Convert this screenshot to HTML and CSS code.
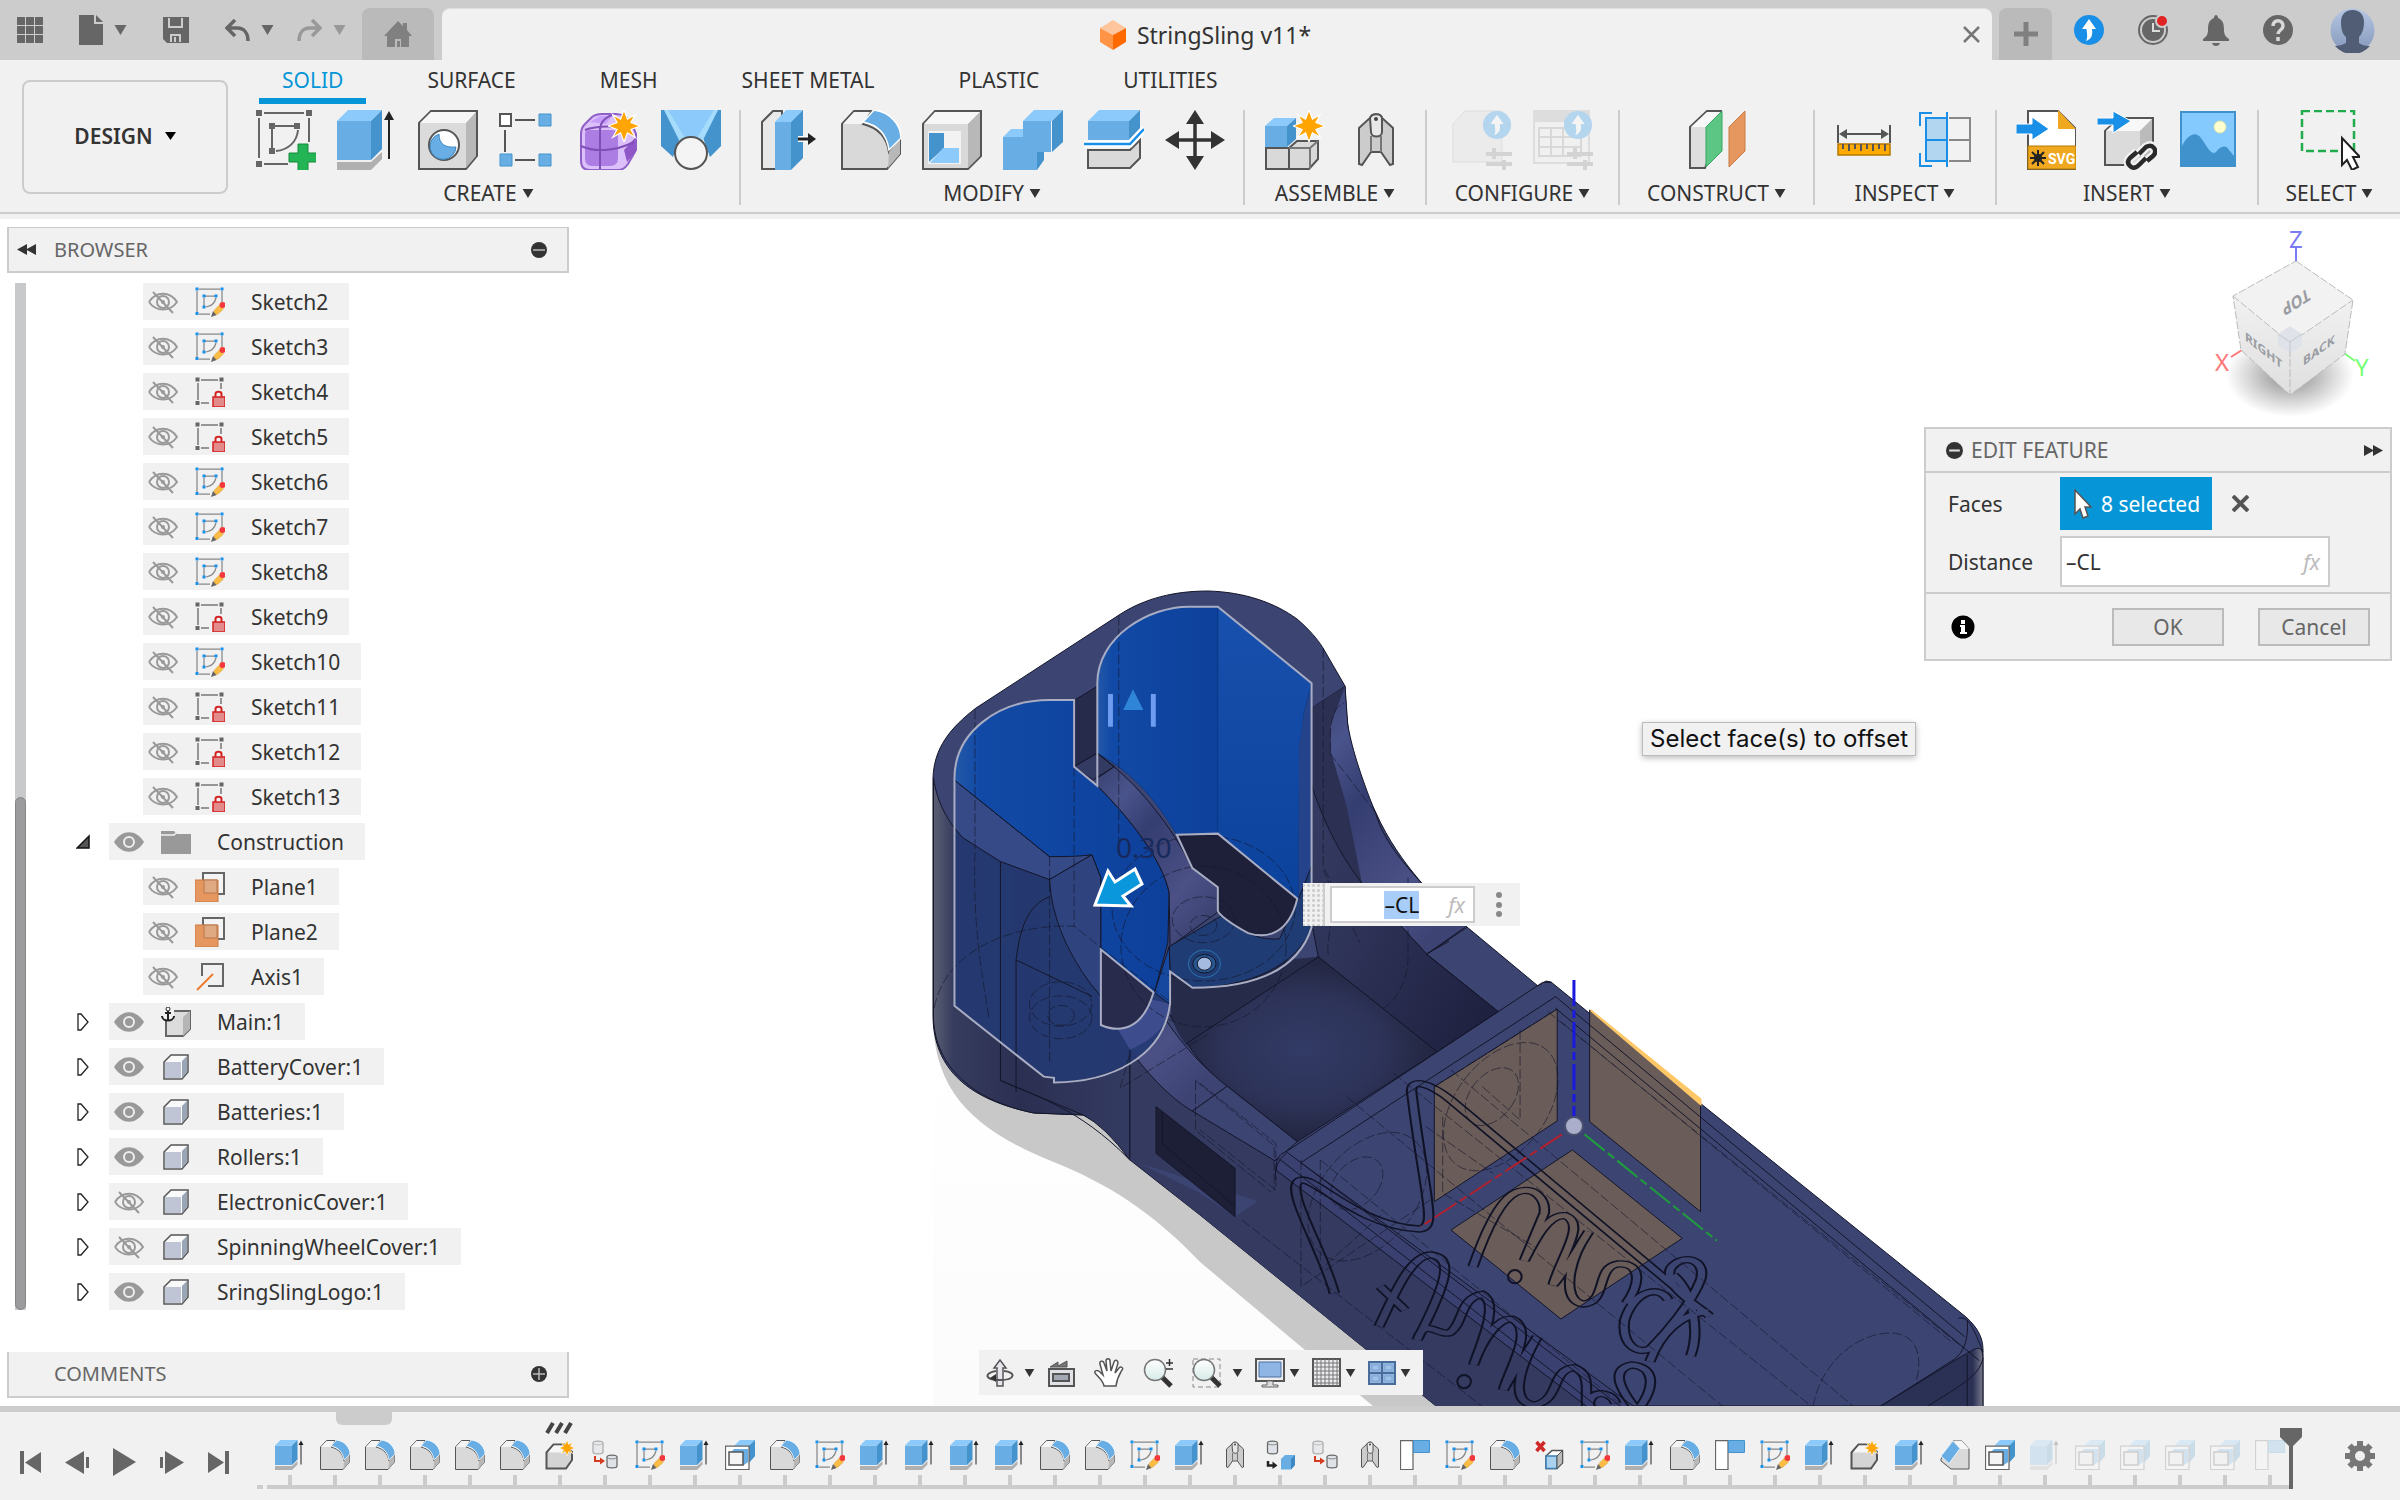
FILE: index.html
```html
<!DOCTYPE html>
<html lang="en">
<head>
<meta charset="utf-8">
<title>StringSling v11*</title>
<link rel="stylesheet" href="styles.css">
</head>
<body>
<svg class="defs" aria-hidden="true">
  <defs>
    <symbol id="caret" viewBox="0 0 12 10"><path d="M0 0H12L6 10Z" fill="currentColor"/></symbol>
    <symbol id="extrude" viewBox="0 0 60 60"><path d="M0 52H34L45 42V49L34 60H0Z" fill="#b0b0b0"/><path d="M0 11H34V50H0Z" fill="#68aee4"/><path d="M0 11L11 0H45L34 11Z" fill="#8bcafb"/><path d="M34 11L45 0V39L34 50Z" fill="#4593cc"/><path d="M52 6V49" stroke="#222" stroke-width="2"/><path d="M47 10L52 1L57 10Z" fill="#222"/></symbol>
    <symbol id="fillet" viewBox="0 0 60 60"><path d="M1 14L13 1H30L22 14C38 18 46 28 48 42L59 28V44L46 59H1Z" fill="#d9d9d9" stroke="#555" stroke-width="2"/><path d="M2 14L13 2H29L21 14Z" fill="#f4f4f4"/><path d="M48 42L59 28V44L47 58Z" fill="#b8b8b8"/><path d="M22 12L33 0C50 2 60 16 60 28L48 40C46 26 38 15 22 12Z" fill="#68aee4" stroke="#fff" stroke-width="1.5"/></symbol>
    <symbol id="chamfer" viewBox="0 0 60 60"><path d="M2 38L26 2H44L58 18V58H22L2 42Z" fill="#d9d9d9" stroke="#555" stroke-width="2"/><path d="M28 2H44L58 18H40Z" fill="#f6f6f6"/><path d="M2 32L26 2L40 17L18 47Z" fill="#68aee4" stroke="#fff" stroke-width="1.5"/></symbol>
    <symbol id="shell" viewBox="0 0 60 60"><path d="M1 14L13 1H59V46L46 59H1Z" fill="#d9d9d9" stroke="#555" stroke-width="2"/><path d="M2 14L13 2H58L46 14Z" fill="#f6f6f6"/><path d="M46 14L58 2V46L46 58Z" fill="#b8b8b8"/><path d="M6 21H39V54H6Z" fill="#f2f2f2"/><path d="M7 23H22V38L7 52Z" fill="#4593cc"/><path d="M8 53L21 38H37V53Z" fill="#8bcafb"/></symbol>
    <symbol id="offset" viewBox="0 0 60 60"><path d="M18 12L30 0H60V32L48 44H18Z" fill="#8bcafb"/><path d="M48 12L60 0V32L48 46Z" fill="#4593cc"/><path d="M1 12H48V59H1Z" fill="#fff" stroke="#666" stroke-width="2.5"/><path d="M10 26L18 18H46V44L38 50H10Z" fill="#68aee4"/><path d="M8 24H36V50H8Z" fill="#f4f4f4" stroke="#555" stroke-width="3"/></symbol>
    <symbol id="flange" viewBox="0 0 60 60"><path d="M1 1H26V59H1Z" fill="#fff" stroke="#666" stroke-width="2.5"/><path d="M27 1H59V25H27Z" fill="#68aee4" stroke="#4593cc" stroke-width="2"/></symbol>
    <symbol id="joint" viewBox="0 0 60 60"><path d="M13 18L24 8C26 3 34 3 36 8L47 18V54L44 55L35 42H25L16 55L13 54Z" fill="#ccc" stroke="#555" stroke-width="2"/><path d="M24 8C26 3 35 3 36 8V22C36 28 25 28 25 22Z" fill="#e8e8e8" stroke="#555" stroke-width="2"/><path d="M25 26V42M35 26V42" stroke="#777" stroke-width="2"/><circle cx="30" cy="9" r="2" fill="#444"/></symbol>
    <symbol id="star" viewBox="0 0 28 28"><path d="M14 0L17 8L24 4L20 11L28 14L20 17L24 24L17 20L14 28L11 20L4 24L8 17L0 14L8 11L4 4L11 8Z" fill="#ffa400" stroke="#fff" stroke-width="1"/></symbol>
    <symbol id="newcomp" viewBox="0 0 60 60"><path d="M3 25L17 9H40L54 24V40L42 57H3Z" fill="#d4d4d4" stroke="#555" stroke-width="4"/><path d="M6 25L18 11H38L40 25Z" fill="#f6f6f6"/><use href="#star" x="28" y="0" width="32" height="32"/></symbol>
    <symbol id="cyl" viewBox="0 0 24 30"><path d="M2 6C2 1 22 1 22 6V24C22 29 2 29 2 24Z" fill="#dfe2e8" stroke="#666" stroke-width="2.5"/><path d="M2 6C2 11 22 11 22 6" fill="none" stroke="#888" stroke-width="2"/></symbol>
    <symbol id="copy" viewBox="0 0 60 60"><use href="#cyl" x="4" y="0" width="24" height="30" opacity=".5"/><use href="#cyl" x="32" y="28" width="24" height="30"/><path d="M10 32V42H22" fill="none" stroke="#d63b22" stroke-width="4"/><path d="M20 35L30 42L20 49Z" fill="#d63b22"/></symbol>
    <symbol id="tobody" viewBox="0 0 60 60"><use href="#cyl" x="0" y="0" width="30" height="30"/><path d="M32 38L40 30H60V50L52 59H32Z" fill="#68aee4"/><path d="M52 38L60 30V50L52 59Z" fill="#3d87c2"/><path d="M6 42V51H16" fill="none" stroke="#222" stroke-width="5"/><path d="M15 43L25 51L15 58Z" fill="#222"/></symbol>
    <symbol id="remove" viewBox="0 0 60 60"><path d="M3 4L19 22M19 4L3 22" stroke="#cf2a27" stroke-width="7"/><path d="M22 32L34 21H55V46L44 57H22Z" fill="#fff" stroke="#555" stroke-width="3"/><path d="M22 32H44V57H22Z" fill="#a9d2ee" stroke="#3c7eb4" stroke-width="3"/><path d="M44 32L55 21V46L44 57Z" fill="#bbb" stroke="#555" stroke-width="2"/></symbol>
    <symbol id="sketchpen" viewBox="0 0 60 60"><path d="M8 4H50M4 8V50M54 8V30M8 54H30M19 18H40M18 22V38M22 40C34 38 40 30 42 22" fill="none" stroke="#888" stroke-width="2.5"/><path d="M1 1h6v6h-6zM51 1h6v6h-6zM1 50h6v6h-6zM15 15h6v6h-6zM39 15h6v6h-6zM15 37h6v6h-6z" fill="#1a8fe8"/><path d="M39 46L49 36L57 44L46 54L36 57Z" fill="#fbbc45" stroke="#d8962a" stroke-width="1"/><path d="M32 60L36 48L43 56Z" fill="#666"/><circle cx="55" cy="36" r="6" fill="#f2383a"/></symbol>
    <symbol id="sketchlock" viewBox="0 0 60 60"><path d="M12 6H46M6 12V46M52 12V24M12 52H28" stroke="#777" stroke-width="3"/><path d="M1 1h8v8h-8zM49 1h8v8h-8zM1 48h8v8h-8z" fill="#666"/><path d="M41 40V34C41 28 53 28 53 34V40" fill="none" stroke="#d32222" stroke-width="4"/><path d="M36 40H60V60H36Z" fill="#e38a8a" stroke="#d32222" stroke-width="3"/></symbol>
    <symbol id="eye" viewBox="0 0 30 20"><path d="M0 10C8-3 22-3 30 10C22 23 8 23 0 10Z" fill="#999"/><circle cx="15" cy="10" r="5" fill="none" stroke="#eee" stroke-width="2"/></symbol>
    <symbol id="eyeoff" viewBox="0 0 30 24"><path d="M1 12C8 1 22 1 29 12C22 22 8 22 1 12M5 2L25 23" fill="none" stroke="#999" stroke-width="2"/><circle cx="15" cy="12" r="6" fill="none" stroke="#999" stroke-width="2"/><circle cx="15" cy="12" r="2" fill="#999"/></symbol>
    <symbol id="folder" viewBox="0 0 30 26"><path d="M0 2H13L16 5H30V25H0Z" fill="#999"/><path d="M0 6H13L16 3" fill="none" stroke="#f1f1f1" stroke-width="1.5"/></symbol>
    <symbol id="plane" viewBox="0 0 30 30"><path d="M8 1H29V22H8Z" fill="#f4f4f4" stroke="#666" stroke-width="2"/><path d="M0 8H23V30H0Z" fill="#e6975f" stroke="#c97b43"/><path d="M9 8H22V21H9Z" fill="#dfa981" stroke="#b9774c"/></symbol>
    <symbol id="axis" viewBox="0 0 30 30"><path d="M7 14V2H28V24H13" fill="none" stroke="#666" stroke-width="2"/><path d="M2 28L18 12" stroke="#ec7c33" stroke-width="2"/></symbol>
    <symbol id="body" viewBox="0 0 30 30"><path d="M3 10L10 3H27V20L21 27H3Z" fill="#fafafa" stroke="#555" stroke-width="1.5"/><path d="M4 10H20V26H4Z" fill="#bfc5d4"/><path d="M21 9L26 4V20L21 26Z" fill="#9aa5b5"/></symbol>
    <symbol id="anchor" viewBox="0 0 30 30"><path d="M5 10L12 4H29V22L22 29H5Z" fill="#dcdcdc" stroke="#666" stroke-width="2"/><path d="M22 10L29 4V22L22 29Z" fill="#b5b5b5"/><path d="M0 0H13V14H0Z" fill="#f1f1f1"/><path d="M7 3V14M1 9C1 15 13 15 13 9M4 6H10" fill="none" stroke="#222" stroke-width="2"/><circle cx="7" cy="2" r="2" fill="#fff" stroke="#222"/></symbol>
    <symbol id="twisty" viewBox="0 0 12 18"><path d="M1 1H4L11 9L4 17H1Z" fill="#fff" stroke="#222" stroke-width="1.3"/></symbol>
    <symbol id="extension" viewBox="0 0 32 32"><circle cx="16" cy="16" r="15" fill="#1a8fe8"/><path d="M16 5L23 15H19C20 22 18 25 13 27C15 23 14 20 13.500 15H9Z" fill="#fff"/></symbol>
    <linearGradient id="gAvatar" x2="0" y2="1"><stop stop-color="#b4c6e2"/><stop offset="1" stop-color="#8698bb"/></linearGradient>
    <linearGradient id="gWall"><stop stop-color="#5b5f74"/><stop offset=".1" stop-color="#363c5e"/><stop offset=".45" stop-color="#2b3052"/><stop offset="1" stop-color="#343b62"/></linearGradient>
    <linearGradient id="gPocket"><stop stop-color="#2458a8"/><stop offset=".12" stop-color="#114aa6"/><stop offset="1" stop-color="#0d409b"/></linearGradient>
    <linearGradient id="gPocketR" x2="0" y2="1"><stop stop-color="#1850ad"/><stop offset="1" stop-color="#0b429c"/></linearGradient>
    <linearGradient id="gStrip" x2=".7" y2="1"><stop stop-color="#343c68"/><stop offset=".25" stop-color="#4a548c"/><stop offset=".45" stop-color="#353e70"/><stop offset=".8" stop-color="#4b5085"/><stop offset="1" stop-color="#3d4474"/></linearGradient>
    <linearGradient id="gInner" y2=".8"><stop stop-color="#373e66"/><stop offset=".5" stop-color="#2d3256"/><stop offset="1" stop-color="#1f2140"/></linearGradient>
    <radialGradient id="gFloor"><stop stop-color="#323b66"/><stop offset=".6" stop-color="#2d3358"/><stop offset="1" stop-color="#22253f"/></radialGradient>
    <linearGradient id="gEdge"><stop offset=".9" stop-color="#2b3055"/><stop offset="1" stop-color="#77798a"/></linearGradient>
    <linearGradient id="gGround" x2="0" y2="1"><stop stop-color="#fff"/><stop offset="1" stop-color="#fbfbfb"/></linearGradient>
    <linearGradient id="gLens" x2="0" y2="1"><stop stop-color="#fff"/><stop offset="1" stop-color="#d5ebe8"/></linearGradient>
    <linearGradient id="gFace" x2="0" y2="1"><stop stop-color="#f1f1f1"/><stop offset="1" stop-color="#dfdfdf"/></linearGradient>
    <radialGradient id="gShade"><stop stop-color="#777" stop-opacity=".9"/><stop offset="1" stop-color="#888" stop-opacity="0"/></radialGradient>
  </defs>
</svg>

<header class="topbar">
  <div class="quick">
    <button class="ic" aria-label="Data panel"><svg width="26" height="26" viewBox="0 0 26 26"><path d="M0 0h8v8H0zM9 0h8v8H9zM18 0h8v8h-8zM0 9h8v8H0zM9 9h8v8H9zM18 9h8v8h-8zM0 18h8v8H0zM9 18h8v8H9zM18 18h8v8h-8z" fill="#666"/></svg></button>
    <button class="ic file" aria-label="File"><svg width="24" height="30" viewBox="0 0 24 30"><path d="M0 0H15V9H24V30H0Z" fill="#666"/><path d="M17 0L24 7H17Z" fill="#666"/></svg><svg width="13" height="10"><use href="#caret"/></svg></button>
    <button class="ic" aria-label="Save"><svg width="26" height="26" viewBox="0 0 26 26"><path d="M0 0H26V26H4L0 22Z" fill="#666"/><path d="M6 1V10H19V1M8 25V18H17V25M12 20V25" fill="none" stroke="#ccc" stroke-width="2"/></svg></button>
    <div class="history">
      <button class="ic" aria-label="Undo"><svg width="25" height="23" viewBox="0 0 25 23"><path d="M10 1L2 9L10 17M3 9H12C19 9 23 14 23 22" fill="none" stroke="#666" stroke-width="3.500"/></svg><svg width="13" height="10"><use href="#caret"/></svg></button>
      <button class="ic faded" aria-label="Redo"><svg width="25" height="23" viewBox="0 0 25 23"><path d="M15 1L23 9L15 17M22 9H13C6 9 2 14 2 22" fill="none" stroke="#666" stroke-width="3.500"/></svg><svg width="13" height="10"><use href="#caret"/></svg></button>
    </div>
  </div>
  <button class="tab small home" aria-label="Home"><svg width="28" height="26" viewBox="0 0 28 26"><path d="M14 0L19 5V2H23V9L28 15H25V26H17V18H11V26H3V15H0Z" fill="#808080"/><path d="M13 20h3v6h-3z" fill="#808080"/></svg></button>
  <div class="tab doc">
    <div class="title"><svg width="28" height="30" viewBox="0 0 28 30"><path d="M14 0L27 8L14 15L1 8Z" fill="#ffc59c"/><path d="M1 8L14 15V30L1 22Z" fill="#ff9447"/><path d="M27 8L14 15V30L27 22Z" fill="#ff6a00"/></svg><span>StringSling v11*</span></div>
    <button class="ic close" aria-label="Close"><svg width="17" height="17" viewBox="0 0 17 17"><path d="M1 1L16 16M16 1L1 16" stroke="#777" stroke-width="2.500"/></svg></button>
  </div>
  <button class="tab small plus" aria-label="New tab"><svg width="24" height="24" viewBox="0 0 24 24"><path d="M12 0V24M0 12H24" stroke="#808080" stroke-width="5"/></svg></button>
  <div class="account">
    <button class="ic" aria-label="Extensions"><svg width="32" height="32"><use href="#extension"/></svg></button>
    <button class="ic" aria-label="Job status"><svg width="32" height="32" viewBox="0 0 32 32"><circle cx="15" cy="16" r="14" fill="none" stroke="#666" stroke-width="2"/><circle cx="15" cy="16" r="11" fill="#666"/><path d="M15 9V17H22" fill="none" stroke="#ddd" stroke-width="2"/><circle cx="24" cy="7" r="6" fill="#e02424" stroke="#ccc" stroke-width="2"/></svg></button>
    <button class="ic" aria-label="Notifications"><svg width="26" height="31" viewBox="0 0 26 31"><path d="M11 3C11-1 15-1 15 3C20 5 21 9 21 15C21 20 23 22 26 24V26H0V24C3 22 5 20 5 15C5 9 6 5 11 3ZM9 28H17C16 32 10 32 9 28Z" fill="#666"/></svg></button>
    <button class="ic" aria-label="Help"><svg width="32" height="32" viewBox="0 0 32 32"><circle cx="16" cy="16" r="15" fill="#666"/><path d="M11 12C11 5 21 5 21 12C21 16 16 16 16 20M16 23V27" fill="none" stroke="#d8d8d8" stroke-width="3.500"/></svg></button>
    <button class="ic" aria-label="Profile"><svg width="45" height="45" viewBox="0 0 45 45"><circle cx="22.500" cy="22.500" r="22" fill="url(#gAvatar)"/><path d="M11 14C11 6 16 2 22.500 2S34 6 34 14C34 21 32 26 29 29V35C33 38 38 38 40 38A23 23 0 0 1 5 38C8 38 13 37 16 35V29C12 26 11 20 11 14Z" fill="#505d75"/></svg></button>
  </div>
</header>

<section class="ribbon">
  <div class="ribbon-in">
    <button class="design">DESIGN <svg width="11" height="8" viewBox="0 0 12 10" preserveAspectRatio="none"><path d="M0 0H12L6 10Z"/></svg></button>
    <div class="ribbon-main">
      <nav class="tabs">
        <button class="on">SOLID</button><button>SURFACE</button><button>MESH</button><button>SHEET METAL</button><button>PLASTIC</button><button>UTILITIES</button>
      </nav>
      <div class="groups">
        <div class="group">
          <div class="tools">
            <button aria-label="Create sketch"><svg viewBox="0 0 60 60"><path d="M8 3H48M3 8V48M53 8V32M8 54H32M18 16H38M16 18V38M20 41C32 40 41 32 42 20" fill="none" stroke="#666" stroke-width="2"/><path d="M0 0h6v6H0zM50 0h6v6h-6zM0 51h6v6H0zM13 13h6v6h-6zM38 13h6v6h-6zM13 38h6v6h-6z" fill="#666"/><path d="M42 34h10v9h9v9h-9v9h-10v-9h-9v-9h9z" fill="#22b455" stroke="#148a3c"/></svg></button>
            <button aria-label="Extrude"><svg><use href="#extrude"/></svg></button>
            <button aria-label="Hole"><svg viewBox="0 0 60 60"><path d="M1 13L13 1H59V46L48 59H1Z" fill="#dbdbdb" stroke="#555" stroke-width="2"/><path d="M2 13L13 2H58L48 13Z" fill="#f6f6f6"/><path d="M48 13L58 2V46L48 58Z" fill="#b8b8b8"/><circle cx="26" cy="35" r="15" fill="#fff" stroke="#555" stroke-width="2"/><path d="M21 24C21 34 27 38 38 37A13 13 0 1 1 21 24Z" fill="#68aee4" stroke="#3d87c2"/></svg></button>
            <button aria-label="Pattern"><svg viewBox="0 0 60 60"><path d="M16 10H36M6 20V42M16 50H36" stroke="#555" stroke-width="2"/><path d="M1 4h11v12H1z" fill="#fff" stroke="#555" stroke-width="2"/><path d="M40 4h12v12H40zM1 44h12v12H1zM40 44h12v12H40z" fill="#68aee4" stroke="#4593cc"/></svg></button>
            <button aria-label="Create form"><svg viewBox="0 0 60 60"><path d="M1 24Q1 18 5 14L12 7Q16 4 22 4H36Q46 4 52 14L56 24V40L48 54Q44 60 38 60H10Q1 60 1 51Z" fill="#dcc0fa" stroke="#8e5fc7" stroke-width="2"/><path d="M5 24Q5 20 10 20H32Q38 20 38 26V48Q38 56 30 56H12Q5 56 5 48Z" fill="#ac7ee4"/><path d="M44 40L55 28V42L47 52Z" fill="#9057c9"/><path d="M10 12L20 6H32L26 14Z" fill="#c79dfa"/><path d="M1 36C14 42 34 42 54 32M20 59V20C20 12 26 7 32 5M5 20C14 16 30 16 42 17" fill="none" stroke="#8050b8" stroke-width="2"/><use href="#star" x="28" y="0" width="32" height="32"/></svg></button>
            <button aria-label="Derive"><svg viewBox="0 0 60 60"><path d="M0 0H60V36L49 47L42 28H19L12 47L0 36Z" fill="#4593cc"/><path d="M3 0L18 38H42L57 0L42 38H18Z" fill="#a5dcfb"/><path d="M3 0L20 34H40L57 0Z" fill="#a5dcfb"/><path d="M7 0H53L36 28H24Z" fill="#8bcafb"/><circle cx="30" cy="43" r="16" fill="#f4f4f4" stroke="#555" stroke-width="2"/></svg></button>
          </div>
          <button class="label">CREATE <svg><use href="#caret"/></svg></button>
        </div>
        <div class="group">
          <div class="tools">
            <button aria-label="Press pull"><svg viewBox="0 0 60 60"><path d="M2 12L13 1H22V59H2Z" fill="#e8e8e8" stroke="#555" stroke-width="2"/><path d="M15 12H31V60H15Z" fill="#68aee4"/><path d="M15 12L26 0H43L31 12Z" fill="#8bcafb"/><path d="M31 12L43 0V48L31 60Z" fill="#4593cc"/><path d="M38 29H50" stroke="#fff" stroke-width="6"/><path d="M38 29H50" stroke="#222" stroke-width="3"/><path d="M48 23L56 29L48 35Z" fill="#222"/></svg></button>
            <button aria-label="Fillet"><svg><use href="#fillet"/></svg></button>
            <button aria-label="Shell"><svg><use href="#shell"/></svg></button>
            <button aria-label="Combine"><svg viewBox="0 0 60 60"><path d="M0 27H20V11H48V42H34V60H0Z" fill="#68aee4"/><path d="M0 27L8 19H20V27ZM20 11L31 0H60L49 11Z" fill="#8bcafb"/><path d="M49 11L60 0V32L49 42H41V50L34 60V42H49Z" fill="#4593cc"/></svg></button>
            <button aria-label="Split body"><svg viewBox="0 0 60 60"><path d="M4 40H46L56 30V48L46 58H4Z" fill="#d9d9d9" stroke="#555" stroke-width="2"/><path d="M4 30H45V11H4Z" fill="#68aee4"/><path d="M4 11L15 0H56L45 11Z" fill="#8bcafb"/><path d="M45 11L56 0V19L45 30Z" fill="#4593cc"/><path d="M0 34H46L60 19" fill="none" stroke="#fff" stroke-width="7"/><path d="M0 34H46L60 19" fill="none" stroke="#1a8fe8" stroke-width="2.500"/></svg></button>
            <button aria-label="Move"><svg viewBox="0 0 60 60"><path d="M30 8V52M8 30H52" stroke="#333" stroke-width="3.500"/><path d="M30 0L39 14H21ZM30 60L39 46H21ZM0 30L14 21V39ZM60 30L46 21V39Z" fill="#333"/></svg></button>
          </div>
          <button class="label">MODIFY <svg><use href="#caret"/></svg></button>
        </div>
        <div class="group">
          <div class="tools">
            <button aria-label="New component"><svg viewBox="0 0 60 60"><path d="M1 38H24V59H1ZM24 38L32 31H53V49L44 59H24Z" fill="#d9d9d9" stroke="#555" stroke-width="2"/><path d="M24 38H45V59M45 38L53 31" fill="none" stroke="#777" stroke-width="2"/><path d="M0 16H22V37H0Z" fill="#68aee4"/><path d="M0 16L9 8H31L22 16Z" fill="#8bcafb"/><path d="M22 16L31 8V29L22 37Z" fill="#4593cc"/><use href="#star" x="28" y="0" width="32" height="32"/></svg></button>
            <button aria-label="Joint"><svg><use href="#joint"/></svg></button>
          </div>
          <button class="label">ASSEMBLE <svg><use href="#caret"/></svg></button>
        </div>
        <div class="group">
          <div class="tools dim">
            <button aria-label="Configure" disabled><svg viewBox="0 0 60 60"><path d="M1 14L13 1H50V52H1Z" fill="#ddd" stroke="#aaa"/><path d="M34 44H60M34 54H60M42 38V49M52 50V60" stroke="#888" stroke-width="4"/><use href="#extension" x="30" y="0" width="30" height="30"/></svg></button>
            <button aria-label="Configuration table" disabled><svg viewBox="0 0 60 60"><path d="M1 1H56V53H1Z" fill="#eee" stroke="#aaa" stroke-width="2"/><path d="M1 1H56V12H1Z" fill="#aaa"/><path d="M6 18H48V46H6ZM6 27H48M6 37H48M18 18V46M30 18V46" fill="none" stroke="#999" stroke-width="2"/><path d="M34 44H60M34 54H60M42 38V49M52 50V60" stroke="#888" stroke-width="4"/><use href="#extension" x="30" y="0" width="30" height="30"/></svg></button>
          </div>
          <button class="label">CONFIGURE <svg><use href="#caret"/></svg></button>
        </div>
        <div class="group">
          <div class="tools">
            <button aria-label="Offset plane"><svg viewBox="0 0 60 60"><path d="M3 17L20 1H34V17L18 58H3Z" fill="#dedede" stroke="#555" stroke-width="2"/><path d="M4 17L20 2H33L19 17Z" fill="#f8f8f8"/><path d="M19 17L35 1V41L19 57Z" fill="#5cc684" stroke="#38a563"/><path d="M42 17L58 1V41L42 57Z" fill="#e6975f" stroke="#c97b43"/></svg></button>
          </div>
          <button class="label">CONSTRUCT <svg><use href="#caret"/></svg></button>
        </div>
        <div class="group">
          <div class="tools">
            <button aria-label="Measure"><svg viewBox="0 0 60 60"><path d="M3 15V33M55 15V33M8 24H50" stroke="#555" stroke-width="2"/><path d="M4 24L12 19V29ZM54 24L46 19V29Z" fill="#555"/><path d="M3 34H55V45H3Z" fill="#ffaa00" stroke="#b47800" stroke-width="1.500"/><path d="M8 34V39M14 34V41M20 34V39M26 34V41M32 34V39M38 34V41M44 34V39M50 34V41" stroke="#555" stroke-width="2"/></svg></button>
            <button aria-label="Section"><svg viewBox="0 0 60 60"><path d="M33 8H54V51H33M33 30H54" fill="#f2f2f2" stroke="#888" stroke-width="2"/><path d="M10 8H31V51H10ZM10 30H31" fill="#b2d6f0" stroke="#1a8fe8" stroke-width="2"/><path d="M31 2V57M16 3H4V16M4 43V56H16" fill="none" stroke="#1a8fe8" stroke-width="2"/></svg></button>
          </div>
          <button class="label">INSPECT <svg><use href="#caret"/></svg></button>
        </div>
        <div class="group">
          <div class="tools">
            <button aria-label="Insert SVG"><svg viewBox="0 0 60 60"><path d="M12 1H42L60 19V59H12Z" fill="#fff" stroke="#555" stroke-width="2"/><path d="M42 0L60 19H42Z" fill="#f0a820"/><path d="M12 36H60V59H12Z" fill="#f0a820" stroke="#b47800"/><path d="M0 14H16V7L33 19L16 30V24H0Z" fill="#1a8fe8" stroke="#fff"/><g stroke="#222" stroke-width="2" fill="none"><circle cx="22" cy="48" r="3"/><path d="M22 40V56M14 48H30M16 42L28 54M28 42L16 54"/></g><text x="32" y="54" class="svgtxt">SVG</text></svg></button>
            <button aria-label="Insert derive"><svg viewBox="0 0 60 60"><path d="M8 21L22 8H56V42L43 55H8Z" fill="#dbdbdb" stroke="#555" stroke-width="2"/><path d="M9 21L22 9H55L43 21Z" fill="#f8f8f8"/><path d="M43 21L55 9V42L43 54Z" fill="#bbb"/><path d="M0 8H16V1L34 11L16 23V15H0Z" fill="#1a8fe8" stroke="#fff"/><g fill="none" stroke="#f1f1f1" stroke-width="9"><path d="M42 44L49 37Q54 34 57 38Q60 42 56 46L50 51M49 48L42 55Q37 60 33 56Q29 52 33 48L40 42"/></g><g fill="none" stroke="#2a2a2a" stroke-width="4.500"><path d="M42 44L49 37Q54 34 57 38Q60 42 56 46L50 51M49 48L42 55Q37 60 33 56Q29 52 33 48L40 42"/></g></svg></button>
            <button aria-label="Canvas"><svg viewBox="0 0 60 60"><path d="M3 2H57V56H3Z" fill="#84caff" stroke="#3f92cc" stroke-width="2"/><path d="M4 36C9 26 17 20 23 28C29 36 33 46 38 42C42 36 48 34 51 40L56 46V55H4Z" fill="#3f92cc"/><circle cx="42" cy="17" r="6" fill="#ffffd0" stroke="#dfe6a8"/></svg></button>
          </div>
          <button class="label">INSERT <svg><use href="#caret"/></svg></button>
        </div>
        <div class="group">
          <div class="tools">
            <button aria-label="Select"><svg viewBox="0 0 60 60"><path d="M2 1H54V41H2Z" fill="none" stroke="#20ab4c" stroke-width="2.500" stroke-dasharray="8 4"/><path d="M42 28L60 47H53L58 57L52 60L47 50L42 55Z" fill="#fff" stroke="#222" stroke-width="2"/></svg></button>
          </div>
          <button class="label">SELECT <svg><use href="#caret"/></svg></button>
        </div>
      </div>
    </div>
  </div>
</section>

<main class="viewport">
  <svg class="scene" viewBox="0 219 2400 1187" preserveAspectRatio="xMidYMid slice">
    <defs>
      <path id="script" d="M522 980C540 900 570 780 605 757C640 735 662 780 658 820L620 962C640 900 665 822 698 827C740 850 690 950 675 1035C700 990 725 920 743 875C705 960 690 1080 732 1092C780 1090 755 980 800 972C850 970 838 1040 815 1090M895 1080C880 1035 830 1050 812 1140C805 1220 840 1245 862 1225C890 1180 940 1090 957 1020C970 955 920 940 900 985C885 1040 950 1095 974 1128M860 1265C880 1180 920 1120 972 1115M938 1248C955 1180 945 1060 905 1005M257 1060C235 930 160 745 190 722C215 700 300 860 420 867C455 860 430 780 405 460C400 410 440 430 480 480L930 1070M342 1160C370 1070 400 950 440 945C485 950 475 1020 415 1200M345 1040L392 1110M415 1200C430 1130 455 1190 478 1178C505 1150 495 1075 540 1063C572 1090 540 1200 523 1275C540 1200 570 1130 598 1138C640 1170 590 1290 580 1350C600 1290 630 1230 645 1190C605 1300 595 1390 640 1395C690 1380 670 1290 715 1283C750 1300 735 1360 740 1400M842 1400C870 1340 870 1280 825 1275C780 1290 810 1360 830 1400M745 1400C740 1350 785 1350 795 1390"/>
      <mask id="tube" maskUnits="userSpaceOnUse" x="0" y="300" width="1200" height="1200"><path d="M0 300H1200V1500H0Z" fill="#fff"/><use href="#script" fill="none" stroke="#000" stroke-width="14"/></mask>
    </defs>
    <path d="M933 1050H1380V1406H933Z" fill="url(#gGround)"/>
    <path d="M933 1020C935 1090 970 1130 1061 1165C1120 1190 1160 1220 1200 1262L1305 1350L1373 1406H1440L1373 1340L1083 1100Z" fill="#c8c8c8"/>
    <path d="M933 778C934 748 950 728 976 708L1119 615C1145 598 1175 591 1208 591C1245 592 1275 603 1297 619C1310 630 1318 640 1323 648L1345 686C1346 710 1347 725 1351 744C1357 770 1364 790 1376 813C1388 840 1404 862 1420 881C1435 900 1450 914 1467 927L1538 986L1546 981L1551 982L1700 1103L1966 1317C1978 1328 1983 1338 1983 1350V1406H1436L1200 1215L1130 1160Q1105 1122 1083 1115L1034 1113C970 1100 933 1070 933 1015Z" fill="#3c4472" stroke="#14162a"/>
    <g class="lines" transform="translate(900 560) scale(.4464 .3827)">
      <!-- outer wall of the holder and its cut-outs -->
      <path d="M75 570C85 650 120 700 140 725C170 755 200 775 225 788L335 835C345 950 400 1080 515 1280V1568Q460 1480 410 1450L300 1445C150 1410 75 1310 75 1190Z" fill="url(#gWall)"/>
      <path class="bare" d="M515 1280L655 1440L840 1535V1690L515 1568Z" fill="#343a60"/>
      <path d="M997 330L905 400L895 490C930 625 960 730 1035 845L1180 1030L1270 960C1230 910 1190 880 1165 840C1110 770 1080 720 1065 660C1030 560 1010 480 1003 430Z" fill="url(#gStrip)"/>
      <path class="bare" d="M997 330L905 400L895 490C930 640 980 770 1035 845L1000 640L965 500V430Z" fill="#2c3154"/>
      <path d="M895 490C930 625 960 730 1035 845L1180 1030L1340 1180L1203 1285L937 1037L925 965Z" fill="url(#gInner)"/>
      <path d="M937 1037L605 1190C650 1290 700 1350 733 1375L890 1520L1203 1285Z" fill="url(#gFloor)"/>
      <path class="bare" d="M605 1075L937 1037L640 1265C610 1220 600 1180 605 1075Z" fill="#262b4a"/>
      <path d="M937 1037L640 1265" fill="none"/>
      <path d="M335 835C345 950 400 1080 515 1280C560 1350 610 1410 655 1440L733 1375C660 1310 600 1220 570 1150L450 960L430 770Z" fill="url(#gStrip)"/>
      <path d="M655 1440L733 1375L890 1520L840 1570Z" fill="#3c4472"/>
      <!-- selected faces -->
      <path d="M122 575L335 775L430 770L335 835C340 900 390 1060 450 1140V1215C500 1240 540 1215 568 1130L605 1075V1160C600 1280 480 1365 345 1365V1352L320 1350L122 1165Z" fill="#233a72" fill-opacity=".9"/>
      <path d="M122 575L335 775L430 770L335 835L225 788L140 725L122 700Z" fill="#354a86"/>
      <path d="M335 835L430 770L450 830V1140C390 1060 340 950 335 835Z" fill="#2f447f"/>
      <path class="bare" d="M515 1280C590 1240 600 1200 605 1160L570 1150L450 1150Z" fill="#3c4c8c"/>
      <path d="M122 575C120 450 220 366 335 366L390 367V540L442 590C520 680 590 790 603 870L600 1000L570 1130L450 1018V830L430 770C400 775 370 775 335 775Z" fill="url(#gPocket)"/>
      <path class="soft" d="M442 325C440 200 560 120 650 122H712V715L620 718C580 640 530 560 442 505Z" fill="url(#gPocket)"/>
      <path class="soft" d="M712 122L922 322L905 400L895 490L893 885L712 715Z" fill="url(#gPocketR)"/>
      <path class="bare" d="M905 400L922 322V960L893 885V490Z" fill="#24438a"/>
      <path d="M390 367L442 330V505L390 540Z" fill="#272b4b"/>
      <path d="M390 540L442 505L480 540L432 575Z" fill="#343b63"/>
      <path d="M442 505C540 590 610 700 655 805L712 855V920L605 1010L603 870C590 790 520 680 442 590V570L480 540Z" fill="url(#gStrip)"/>
      <path d="M603 1010L720 930C760 960 790 995 850 990L893 885L922 800V960C890 1060 780 1118 650 1118L605 1075Z" fill="#1f3d74"/>
      <path d="M603 1010L570 1130L603 1160L605 1075Z" fill="#1648a0"/>
      <path d="M620 718L712 715L890 885C870 980 820 990 780 975C740 950 712 925 712 915V855L655 805Z" fill="#1e2039"/>
      <path d="M450 1018L568 1130C545 1220 500 1240 450 1215Z" fill="#292b4c"/>
      <g class="dash">
        <ellipse cx="680" cy="940" rx="70" ry="60"/><ellipse cx="680" cy="955" rx="30" ry="26"/><ellipse cx="680" cy="910" rx="205" ry="190"/><ellipse cx="680" cy="1010" rx="185" ry="210"/>
        <ellipse cx="360" cy="1160" rx="70" ry="58"/><ellipse cx="360" cy="1195" rx="70" ry="56"/><ellipse cx="361" cy="1190" rx="30" ry="26"/><path d="M77 1170C100 1020 250 950 390 957L600 1150M168 390V760C165 900 170 1000 200 1200M490 145V740M948 230V800L1030 1000M335 775V1320M390 540V957M965 500C960 430 970 380 995 375M963 505L1065 660M960 1030C950 990 990 900 948 810M1138 830V1040C1138 1090 1120 1140 1085 1170M515 1290L493 1380L690 1240M662 1360V1490L840 1660M662 1360L838 1530V1650"/>
      </g>
      <path d="M225 788V1360L410 1450M260 1045V1390M260 1045C270 950 290 900 335 880M260 1045L430 1140M515 1280V1568M225 1360C300 1400 400 1430 515 1568M1180 1030L1265 960" fill="none"/>
      <g class="halo"><path d="M442 590V325C440 200 560 120 650 122H712L922 322V960C890 1080 780 1118 655 1118L605 1075V1160C590 1300 470 1365 345 1365V1353L322 1350L122 1165V575C120 450 220 366 335 366H390V540Z"/><path d="M620 718L712 715L890 885C870 980 820 990 780 975C740 950 712 925 712 915V855L655 805ZM450 1018L568 1130C545 1220 500 1240 450 1215Z"/></g>
      <circle cx="682" cy="1055" r="36" fill="none" stroke="#2a74ae"/><ellipse cx="682" cy="1055" rx="26" ry="24" fill="#28568f"/><ellipse cx="682" cy="1055" rx="16" ry="17" fill="#a6bbe0" stroke="none"/>
      <path class="bare" d="M466 350h11v86h-11zM562 350h11v86h-11z" fill="#6e9cf0"/><path class="bare" d="M522 338L545 392H500Z" fill="#2f86d8"/>
    </g>
    <text class="dim-text" x="1116" y="858">0.30</text>
    <path d="M1095 905L1108 871L1115 882L1135 869L1142 884L1123 896L1131 906Z" fill="#0a97dc" stroke="#fff" stroke-width="3"/>
    <g class="lines" transform="translate(1200 940) scale(.523 .3333)">
      <!-- long body with the lid -->
      <path class="bare" d="M-140 650L0 760L67 830L143 750L150 655L740 1400H452L0 825Z" fill="#343a60"/>
      <path d="M-84 500L67 685V830L-84 640Z" fill="#1d1f37"/><path d="M-72 515V610L67 800" fill="none"/>
      <path d="M145 690C145 650 155 640 165 635L193 668L830 1400H740Z" fill="#3a4170"/>
      <path d="M1300 1400L1450 1255C1480 1230 1497 1200 1497 1260V1400Z" fill="url(#gEdge)"/>
      <path d="M683 207V543L448 785V440ZM745 210V545L957 815V478ZM712 630L922 895L690 1137L480 870Z" fill="#6a5c58" stroke="#80684f"/>
      <path class="sun" d="M747 211L957 478V492Z"/>
      <path d="M165 635L655 127L672 127M193 668L680 170L1462 1190M680 205L1490 1262M150 655L760 1400M193 668L805 1400M165 640Q140 670 145 720M433 42L476 4M570 215L433 42M1450 1135C1470 1125 1480 1170 1497 1235M1467 1140C1470 1200 1460 1240 1440 1260L1300 1400M1497 1255C1490 1310 1450 1340 1390 1400M1467 1245V1400" fill="none"/>
      <g class="dash">
        <path d="M665 215L1460 1225M690 245L1440 1210M280 470L1000 1400M370 400L1170 1400M230 660L810 1400M480 390L1250 1400M80 840L540 1400M0 430L145 610V750L0 570M612 270V540L540 440M464 530V760L640 920M193 660V1040L440 780M230 660V990L350 820M448 440L683 207M432 560L560 700"/>
        <path d="M1172 1400C1190 1250 1270 1170 1330 1180C1375 1190 1380 1260 1370 1320"/>
        <ellipse cx="558" cy="470" rx="45" ry="90" transform="rotate(18 558 470)"/><ellipse cx="575" cy="500" rx="95" ry="200" transform="rotate(18 575 500)"/><ellipse cx="300" cy="730" rx="45" ry="82" transform="rotate(18 300 730)"/><ellipse cx="320" cy="770" rx="100" ry="200" transform="rotate(18 320 770)"/>
      </g>
      <g mask="url(#tube)"><use href="#script" class="script"/></g>
      <ellipse class="dot" cx="602" cy="1010" rx="13" ry="20"/><ellipse class="dot" cx="505" cy="1325" rx="13" ry="20"/>
      <path class="ax ax-z" d="M715 120V530"/><path class="ax ax-y" d="M735 583L988 902"/><path class="ax ax-x" d="M692 583L422 860"/>
    </g>
    <circle cx="1574" cy="1126" r="9" fill="#aaaecb" stroke="#4a5070" stroke-width="2"/>
  </svg>

  <svg class="cube" viewBox="2200 219 180 206" width="180" height="206" role="img" aria-label="View cube">
    <ellipse cx="2290" cy="375" rx="64" ry="42" fill="url(#gShade)"/>
    <path d="M2296 248V262" stroke="#7b7bf5" stroke-width="2"/><path d="M2231 357L2242 350" stroke="#f77" stroke-width="2"/><path d="M2344 353L2355 361" stroke="#7f7" stroke-width="2"/>
    <path d="M2233 296L2290 343V395L2241 350Z" fill="url(#gFace)"/><path d="M2353 300L2290 343V395L2345 354Z" fill="url(#gFace)"/><path d="M2296 261L2353 300L2290 343L2233 296Z" fill="#f2f2f2"/>
    <path d="M2296 261L2353 300L2345 354L2290 395L2241 350L2233 296ZM2233 296L2290 343V395M2290 343L2353 300" fill="none" stroke="#bbb" stroke-dasharray="8 2"/>
    <path d="M2290 326L2302 334V346L2290 353L2278 346V334Z" fill="#dfe2e8"/><path d="M2278 334L2290 342L2302 334M2290 342V353" fill="none" stroke="#c5c8cf"/>
    <text class="face top" transform="translate(2308 288) rotate(148) skewX(-18)">TOP</text>
    <text class="face" transform="translate(2245 340) skewY(38)">RIGHT</text>
    <text class="face" transform="translate(2303 366) skewY(-36)">BACK</text>
    <text class="ax-t" x="2289" y="248" fill="#7b7bf5">Z</text><text class="ax-t" x="2215" y="371" fill="#f77">X</text><text class="ax-t" x="2355" y="376" fill="#7f7">Y</text>
  </svg>

  <aside class="browser">
    <div class="panel-head"><button class="ic" aria-label="Collapse"><svg width="19" height="11" viewBox="0 0 19 11"><path d="M10 0V11L0 5.500ZM19 0V11L9 5.500Z" fill="#333"/></svg></button><span>BROWSER</span><button class="ic knob" aria-label="Minimise"><svg width="16" height="16" viewBox="0 0 16 16"><circle cx="8" cy="8" r="8" fill="#333"/><path d="M2 8H14" stroke="#bbb" stroke-width="1.500"/></svg></button></div>
    <div class="tree-wrap">
      <div class="scroll"><div class="thumb"></div></div>
      <ul class="tree">
        <li class="leaf"><div><svg class="e"><use href="#eyeoff"/></svg><svg><use href="#sketchpen"/></svg><span>Sketch2</span></div></li>
        <li class="leaf"><div><svg class="e"><use href="#eyeoff"/></svg><svg><use href="#sketchpen"/></svg><span>Sketch3</span></div></li>
        <li class="leaf"><div><svg class="e"><use href="#eyeoff"/></svg><svg><use href="#sketchlock"/></svg><span>Sketch4</span></div></li>
        <li class="leaf"><div><svg class="e"><use href="#eyeoff"/></svg><svg><use href="#sketchlock"/></svg><span>Sketch5</span></div></li>
        <li class="leaf"><div><svg class="e"><use href="#eyeoff"/></svg><svg><use href="#sketchpen"/></svg><span>Sketch6</span></div></li>
        <li class="leaf"><div><svg class="e"><use href="#eyeoff"/></svg><svg><use href="#sketchpen"/></svg><span>Sketch7</span></div></li>
        <li class="leaf"><div><svg class="e"><use href="#eyeoff"/></svg><svg><use href="#sketchpen"/></svg><span>Sketch8</span></div></li>
        <li class="leaf"><div><svg class="e"><use href="#eyeoff"/></svg><svg><use href="#sketchlock"/></svg><span>Sketch9</span></div></li>
        <li class="leaf"><div><svg class="e"><use href="#eyeoff"/></svg><svg><use href="#sketchpen"/></svg><span>Sketch10</span></div></li>
        <li class="leaf"><div><svg class="e"><use href="#eyeoff"/></svg><svg><use href="#sketchlock"/></svg><span>Sketch11</span></div></li>
        <li class="leaf"><div><svg class="e"><use href="#eyeoff"/></svg><svg><use href="#sketchlock"/></svg><span>Sketch12</span></div></li>
        <li class="leaf"><div><svg class="e"><use href="#eyeoff"/></svg><svg><use href="#sketchlock"/></svg><span>Sketch13</span></div></li>
        <li><button class="ic tw" aria-label="Collapse Construction"><svg viewBox="0 0 14 14"><path d="M13 1V13H1Z" fill="#555" stroke="#111" stroke-width="1.500"/></svg></button><div><svg class="e"><use href="#eye"/></svg><svg><use href="#folder"/></svg><span>Construction</span></div></li>
        <li class="leaf"><div><svg class="e"><use href="#eyeoff"/></svg><svg><use href="#plane"/></svg><span>Plane1</span></div></li>
        <li class="leaf"><div><svg class="e"><use href="#eyeoff"/></svg><svg><use href="#plane"/></svg><span>Plane2</span></div></li>
        <li class="leaf"><div><svg class="e"><use href="#eyeoff"/></svg><svg><use href="#axis"/></svg><span>Axis1</span></div></li>
        <li><button class="ic tw" aria-label="Expand"><svg><use href="#twisty"/></svg></button><div><svg class="e"><use href="#eye"/></svg><svg><use href="#anchor"/></svg><span>Main:1</span></div></li>
        <li><button class="ic tw" aria-label="Expand"><svg><use href="#twisty"/></svg></button><div><svg class="e"><use href="#eye"/></svg><svg><use href="#body"/></svg><span>BatteryCover:1</span></div></li>
        <li><button class="ic tw" aria-label="Expand"><svg><use href="#twisty"/></svg></button><div><svg class="e"><use href="#eye"/></svg><svg><use href="#body"/></svg><span>Batteries:1</span></div></li>
        <li><button class="ic tw" aria-label="Expand"><svg><use href="#twisty"/></svg></button><div><svg class="e"><use href="#eye"/></svg><svg><use href="#body"/></svg><span>Rollers:1</span></div></li>
        <li><button class="ic tw" aria-label="Expand"><svg><use href="#twisty"/></svg></button><div><svg class="e"><use href="#eyeoff"/></svg><svg><use href="#body"/></svg><span>ElectronicCover:1</span></div></li>
        <li><button class="ic tw" aria-label="Expand"><svg><use href="#twisty"/></svg></button><div><svg class="e"><use href="#eyeoff"/></svg><svg><use href="#body"/></svg><span>SpinningWheelCover:1</span></div></li>
        <li><button class="ic tw" aria-label="Expand"><svg><use href="#twisty"/></svg></button><div><svg class="e"><use href="#eye"/></svg><svg><use href="#body"/></svg><span>SringSlingLogo:1</span></div></li>
      </ul>
    </div>
    <div class="panel-head comments"><span>COMMENTS</span><button class="ic knob" aria-label="Add comment"><svg width="16" height="16" viewBox="0 0 16 16"><circle cx="8" cy="8" r="8" fill="#333"/><path d="M2 8H14M8 2V14" stroke="#bbb" stroke-width="1.500"/></svg></button></div>
  </aside>

  <form class="edit">
    <div class="edit-head"><svg width="17" height="17" viewBox="0 0 16 16"><circle cx="8" cy="8" r="8" fill="#333"/><path d="M3 8H13" stroke="#ddd" stroke-width="2"/></svg><span>EDIT FEATURE</span><button type="button" class="ic" aria-label="Expand"><svg width="19" height="11" viewBox="0 0 19 11"><path d="M0 0V11L10 5.500ZM9 0V11L19 5.500Z" fill="#333"/></svg></button></div>
    <div class="edit-body">
      <span class="lab">Faces</span>
      <div class="line"><button type="button" class="sel"><svg width="18" height="30" viewBox="0 0 18 30"><path d="M1 1L17 18H11L14 27L9 29L6 20L1 25Z" fill="#fff" stroke="#555" stroke-width="1.500"/></svg>8 selected</button><button type="button" class="ic" aria-label="Clear"><svg width="17" height="17" viewBox="0 0 17 17"><path d="M1 1L16 16M16 1L1 16" stroke="#555" stroke-width="4"/></svg></button></div>
      <label class="lab" for="dist">Distance</label>
      <div class="field"><input id="dist" value="–CL"><i>fx</i></div>
    </div>
    <div class="edit-foot"><svg width="24" height="24" viewBox="0 0 24 24"><circle cx="12" cy="12" r="11.500" fill="#000"/><path d="M10 5h4v4h-4zM9 10h5v7h2v2H9v-2h1v-5H9z" fill="#fff"/></svg><button type="button">OK</button><button type="button">Cancel</button></div>
  </form>

  <div class="tip">Select face(s) to offset</div>

  <div class="mini"><span class="grip"></span><div class="field"><input id="mini" aria-label="Distance" value="–CL"><i>fx</i></div><button class="ic" aria-label="More"><svg width="6" height="26" viewBox="0 0 6 26"><circle cx="3" cy="3" r="3"/><circle cx="3" cy="13" r="3"/><circle cx="3" cy="22" r="3"/></svg></button></div>

  <div class="navbar">
    <button class="ic" aria-label="Orbit"><svg width="28" height="30" viewBox="0 0 28 30"><path d="M11 28V10H8L14 2L20 10H17V28Z" fill="#e4e6ec" stroke="#555" stroke-width="1.500"/><path d="M10 13C-2 15-2 22 14 22C30 22 30 14 18 13" fill="none" stroke="#555" stroke-width="2"/><path d="M4 20L10 16V24Z" fill="#333"/></svg><svg class="c"><use href="#caret"/></svg></button>
    <button class="ic" aria-label="Look at"><svg width="28" height="28" viewBox="0 0 28 28"><path d="M2 10H27V27H2Z" fill="#e0e2e8" stroke="#555" stroke-width="2"/><path d="M6 15H22V22H6Z" fill="#a2a8b4" stroke="#555" stroke-width="2"/><path d="M3 8L11 3V7L20 2V8Z" fill="#777" stroke="#555"/></svg></button>
    <button class="ic wide" aria-label="Pan"><svg width="30" height="30" viewBox="0 0 30 30"><path d="M10 28C9 22 4 19 1 15C0 12 4 12 6 14L9 17L6 6C5 3 9 2 10 5L13 13L12 3C12 0 16 0 16 3L17 13L20 4C21 1 24 2 24 5L21 15L25 10C27 8 30 10 28 12C25 17 23 20 22 28Z" fill="#fff" stroke="#555" stroke-width="1.500"/></svg></button>
    <button class="ic wide" aria-label="Zoom"><svg width="30" height="30" viewBox="0 0 30 30"><path d="M18 18L28 28" stroke="#333" stroke-width="5"/><circle cx="12" cy="12" r="10.500" fill="url(#gLens)" stroke="#777" stroke-width="1.500"/><path d="M23 5H30M26.500 1V8M23 11H30" stroke="#333" stroke-width="1.500"/></svg></button>
    <button class="ic wide" aria-label="Fit"><svg width="30" height="30" viewBox="0 0 30 30"><path d="M1 1H28V29H1Z" fill="none" stroke="#888" stroke-dasharray="5 3"/><path d="M18 18L28 28" stroke="#333" stroke-width="5"/><circle cx="12" cy="12" r="10.500" fill="url(#gLens)" stroke="#777" stroke-width="1.500"/></svg><svg class="c"><use href="#caret"/></svg></button>
    <button class="ic tight" aria-label="Display"><svg width="30" height="30" viewBox="0 0 30 30"><path d="M1 1H29V23H1Z" fill="#eee" stroke="#555" stroke-width="2"/><path d="M4 4H26V19H4Z" fill="#8eb5e4" stroke="#4a70a5"/><path d="M12 23V27H7V29H23V27H18V23Z" fill="#ddd" stroke="#666"/></svg><svg class="c"><use href="#caret"/></svg></button>
    <button class="ic tight" aria-label="Grid"><svg width="29" height="29" viewBox="0 0 29 29"><path d="M1 1H28V28H1Z" fill="#ececf0" stroke="#555" stroke-width="2"/><path d="M5 1V28M9 1V28M13 1V28M17 1V28M21 1V28M25 1V28M1 5H28M1 9H28M1 13H28M1 17H28M1 21H28M1 25H28" stroke="#777"/></svg><svg class="c"><use href="#caret"/></svg></button>
    <button class="ic tight" aria-label="Viewports"><svg width="28" height="24" viewBox="0 0 28 24"><path d="M1 1H27V23H1Z" fill="#8fb4df" stroke="#4a6c9b" stroke-width="2"/><path d="M14 1V23M1 12H27" stroke="#4a6c9b" stroke-width="2"/><path d="M4 4H11V9H4ZM17 4H24V9H17ZM4 15H11V20H4ZM17 15H24V20H17Z" fill="#9fc2e8" stroke="#7fa3cf"/></svg><svg class="c"><use href="#caret"/></svg></button>
  </div>
</main>

<footer class="timeline">
  <div class="play">
    <button class="ic" aria-label="To start"><svg width="21" height="23" viewBox="0 0 21 23"><path d="M0 0H4V23H0ZM21 1V22L5 11.500Z"/></svg></button>
    <button class="ic" aria-label="Step back"><svg width="24" height="23" viewBox="0 0 24 23"><path d="M19 0V23L0 11.500ZM21 6H24V17H21Z"/></svg></button>
    <button class="ic" aria-label="Play"><svg width="23" height="28" viewBox="0 0 23 28"><path d="M0 0L23 14L0 28Z"/></svg></button>
    <button class="ic" aria-label="Step forward"><svg width="24" height="23" viewBox="0 0 24 23"><path d="M5 0V23L24 11.500ZM0 6H3V17H0Z"/></svg></button>
    <button class="ic" aria-label="To end"><svg width="21" height="23" viewBox="0 0 21 23"><path d="M17 0H21V23H17ZM0 1V22L16 11.500Z"/></svg></button>
  </div>
  <div class="track">
    <div class="track-scroll"></div>
    <ol class="events">
      <li><svg><use href="#extrude"/></svg></li><li><svg><use href="#fillet"/></svg></li><li><svg><use href="#fillet"/></svg></li><li><svg><use href="#fillet"/></svg></li><li><svg><use href="#fillet"/></svg></li><li><svg><use href="#fillet"/></svg></li>
      <li><svg class="marks" viewBox="0 0 30 12"><path d="M2 11L8 1M11 11L17 1M20 11L26 1" stroke="#444" stroke-width="4"/></svg><svg><use href="#newcomp"/></svg></li>
      <li><svg><use href="#copy"/></svg></li><li><svg><use href="#sketchpen"/></svg></li><li><svg><use href="#extrude"/></svg></li><li><svg><use href="#offset"/></svg></li><li><svg><use href="#fillet"/></svg></li><li><svg><use href="#sketchpen"/></svg></li>
      <li><svg><use href="#extrude"/></svg></li><li><svg><use href="#extrude"/></svg></li><li><svg><use href="#extrude"/></svg></li><li><svg><use href="#extrude"/></svg></li><li><svg><use href="#fillet"/></svg></li><li><svg><use href="#fillet"/></svg></li><li><svg><use href="#sketchpen"/></svg></li><li><svg><use href="#extrude"/></svg></li>
      <li><svg><use href="#joint"/></svg></li><li><svg><use href="#tobody"/></svg></li><li><svg><use href="#copy"/></svg></li><li><svg><use href="#joint"/></svg></li><li><svg><use href="#flange"/></svg></li><li><svg><use href="#sketchpen"/></svg></li><li><svg><use href="#fillet"/></svg></li><li><svg><use href="#remove"/></svg></li><li><svg><use href="#sketchpen"/></svg></li>
      <li><svg><use href="#extrude"/></svg></li><li><svg><use href="#fillet"/></svg></li><li><svg><use href="#flange"/></svg></li><li><svg><use href="#sketchpen"/></svg></li><li><svg><use href="#extrude"/></svg></li><li><svg><use href="#newcomp"/></svg></li><li><svg><use href="#extrude"/></svg></li><li><svg><use href="#chamfer"/></svg></li><li><svg><use href="#offset"/></svg></li>
      <li class="off"><svg><use href="#extrude"/></svg></li><li class="off"><svg><use href="#offset"/></svg></li><li class="off"><svg><use href="#offset"/></svg></li><li class="off"><svg><use href="#offset"/></svg></li><li class="off"><svg><use href="#offset"/></svg></li><li class="off"><svg><use href="#flange"/></svg></li>
    </ol>
    <svg class="marker" width="22" height="61" viewBox="0 0 22 61"><path d="M0 0H22V9L13 18V61H9V18L0 9Z" fill="#666"/></svg>
  </div>
  <button class="ic gear" aria-label="Settings"><svg width="30" height="30" viewBox="0 0 30 30"><circle cx="15" cy="15" r="8" fill="none" stroke="#777" stroke-width="6"/><path d="M15 0V6M15 24V30M0 15H6M24 15H30M4.500 4.500L8 8M22 22L25.500 25.500M4.500 25.500L8 22M22 8L25.500 4.500" stroke="#777" stroke-width="6"/></svg></button>
</footer>
<script src="app.js"></script>
</body>
</html>
```

FILE: styles.css
```css
* { box-sizing: border-box; }
body {
  margin: 0;
  height: 100vh;
  display: flex;
  flex-direction: column;
  background: #fff;
  color: #333;
  font: 21px/28px "Noto Sans", "Open Sans", sans-serif;
  overflow: hidden;
}
button { font: inherit; color: inherit; background: none; border: 0; padding: 0; }
svg { display: block; flex: none; }
.defs { position: absolute; width: 0; height: 0; }
.ic { display: flex; align-items: center; }

/* Title bar */
.topbar { height: 60px; display: flex; align-items: flex-end; background: #ccc; }
.quick { height: 60px; display: flex; align-items: center; gap: 36px; padding: 0 16px 0 17px; color: #666; }
.quick .ic { gap: 11px; }
.history { display: flex; gap: 23px; }
.faded { opacity: .5; }
.tab { height: 52px; border-radius: 8px 8px 0 0; }
.tab.small { background: #bababa; display: flex; justify-content: center; align-items: center; }
.home { width: 72px; }
.doc { flex: 1; margin: 0 7px 0 8px; background: #f1f1f1; display: flex; align-items: center; padding-right: 12px; border-top: 1px solid #dedede; }
.title { flex: 1; display: flex; justify-content: center; align-items: center; gap: 10px; padding-left: 5px; font-size: 23px; }
.plus { width: 53px; }
.account { height: 60px; display: flex; align-items: center; gap: 33px; padding: 0 25px 0 21px; }
.account .ic:last-child { margin-left: 3px; }

/* Ribbon */
.ribbon { background: #f1f1f1; padding-bottom: 5px; }
.ribbon-in { display: flex; border-bottom: 2px solid #ccc; padding-bottom: 7px; }
.design { width: 206px; height: 114px; margin: 20px 14px 0 22px; border: 2px solid #ccc; border-radius: 8px; font-weight: 600; display: flex; align-items: center; justify-content: center; gap: 12px; padding-bottom: 2px; }
.ribbon-main { flex: 1; }
.tabs { display: flex; gap: 38px; padding-left: 17px; }
.tabs button { height: 44px; padding: 2px 23px 0; border-bottom: 6px solid transparent; }
.tabs .on { color: #0696d7; border-color: #0696d7; }
.groups { margin-top: 6px; display: grid; grid-template-columns: 497fr 504fr 182fr 193fr 195fr 182fr 262fr 143fr; }
.group { border-left: 2px solid #ccc; display: flex; flex-direction: column; align-items: center; gap: 11px; }
.group:first-child { border-color: transparent; padding-right: 6px; }
.tools { display: flex; gap: 21px; }
.tools svg { width: 60px; height: 60px; }
.dim { opacity: .28; }
.label { display: flex; align-items: center; gap: 5px; line-height: 24px; }
.label svg { width: 12px; height: 9px; }
.svgtxt { font: 700 14px "Roboto", sans-serif; fill: #fff; }

/* Canvas */
.viewport { flex: 1; position: relative; min-height: 0; overflow: hidden; }
.scene { position: absolute; inset: 0; width: 100%; height: 100%; }
.lines > path { stroke: #14162a; }
.lines path, .lines ellipse, .lines circle { vector-effect: non-scaling-stroke; }
.lines > path.bare { stroke: none; }
.lines > path.soft { stroke: #0b3a86; }
.lines ellipse { stroke: #14162a; }
.dash * { fill: none; stroke: #14162a; stroke-opacity: .6; stroke-dasharray: 10 3; }
.halo path { fill: none; stroke: #a9adc4; stroke-width: 2; }
#script { vector-effect: none; }
.script { fill: none; stroke: #101226; stroke-width: 22; }
.lines ellipse.dot { fill: none; stroke: #101226; stroke-width: 2; }
.lines path.sun { fill: #ffc766; stroke: #ffc766; stroke-width: 2; }
.lines path.ax { fill: none; stroke-width: 2; stroke-dasharray: 26 4 8 4; }
.lines path.ax-z { stroke: #1a1adf; stroke-width: 3; }
.lines path.ax-y { stroke: #1f9e3c; }
.lines path.ax-x { stroke: #b3202e; }
.dim-text { font: 28px "Noto Sans", sans-serif; fill: #18295c; }
.cube { position: absolute; top: 0; right: 20px; overflow: visible; }
.face { font: 700 12px "Noto Sans", sans-serif; fill: #9a9da3; }
.face.top { font-size: 16px; }
.ax-t { font: 24px "Noto Sans", sans-serif; }

/* Browser panel */
.browser { position: absolute; left: 7px; top: 8px; bottom: 8px; width: 562px; display: flex; flex-direction: column; }
.panel-head { height: 46px; flex: none; display: flex; align-items: center; padding: 0 20px 0 8px; background: #f1f1f1; border: 2px solid #ccc; border-top-width: 1px; font-size: 20px; color: #666; }
.panel-head span { margin-left: 18px; }
.knob { margin-left: auto; }
.comments { margin-top: auto; border-top: 0; }
.comments span { margin-left: 37px; }
.tree-wrap { display: flex; margin: 10px 0 0 8px; }
.scroll { width: 11px; background: #c8c9cb; display: flex; align-items: flex-end; }
.thumb { width: 11px; height: 50%; background: #9b9b9d; border: 1px solid #858587; border-radius: 6px; }
.tree { list-style: none; margin: 0; padding: 0; display: flex; flex-direction: column; gap: 8px; }
.tree li { display: flex; align-items: center; padding-left: 50px; }
.tree li.leaf { padding-left: 117px; }
.tree li > div { height: 37px; display: flex; align-items: center; padding: 0 21px 0 5px; background: #f1f1f1; }
.tree div svg { width: 30px; height: 30px; }
.tree svg.e { width: 30px; height: 24px; margin-right: 17px; }
.tree span { margin-left: 26px; }
.tw { width: 33px; }
.tw svg { width: 14px; height: 18px; }

/* Edit dialog */
.edit { position: absolute; right: 8px; top: 208px; width: 468px; background: #f1f1f1; border: 2px solid #ccc; }
.edit-head { height: 44px; display: flex; align-items: center; gap: 8px; padding: 0 7px 0 20px; color: #666; border-bottom: 2px solid #ccc; }
.edit-head .ic { margin-left: auto; }
.edit-body { display: grid; grid-template-columns: 112px 1fr; row-gap: 6px; align-items: center; padding: 4px 0 5px 22px; border-bottom: 2px solid #ccc; }
.line { display: flex; gap: 20px; }
.sel { width: 152px; height: 53px; background: #0696d7; color: #fff; display: flex; align-items: center; gap: 9px; padding-left: 14px; }
.field { display: flex; align-items: center; width: 270px; height: 51px; background: #fff; border: 2px solid #ccc; padding: 0 8px 0 4px; }
.field input { flex: 1; min-width: 0; border: 0; padding: 0; font: inherit; color: inherit; outline: 0; background: none; }
.field i { color: #bbb; }
.edit-foot { height: 65px; display: flex; align-items: center; gap: 34px; padding: 1px 20px 0 25px; }
.edit-foot svg { margin-right: auto; }
.edit-foot button { width: 112px; height: 38px; background: #e8e8e8; border: 2px solid #bbb; color: #666; }

/* Floating items over the canvas */
.tip { position: absolute; left: 1642px; top: 503px; height: 34px; padding: 0 7px; background: #f1f1f1; border: 1px solid #bbb; box-shadow: 0 2px 6px #0004; font: 24px/32px "Inter", sans-serif; color: #111; white-space: nowrap; }
.mini { position: absolute; left: 1303px; top: 664px; width: 217px; height: 43px; background: #f1f1f1; display: flex; align-items: center; }
.grip { width: 22px; height: 43px; border-right: 2px solid #ccc; background: radial-gradient(circle, #ccc 1px, transparent 2px) 8px 0 / 5px 5px; }
.mini .field { width: 145px; height: 37px; margin: 0 21px 0 5px; }
.mini input { text-align: right; margin-right: 29px; color: #111; }
.mini input::selection { background: #a8cdf8; color: #111; }
.mini .ic svg { fill: #888; }
.navbar { position: absolute; left: 979px; bottom: 11px; width: 444px; height: 45px; background: #f1f1f1; display: flex; align-items: center; gap: 12px; padding: 0 7px; color: #333; }
.navbar .ic { gap: 10px; }
.navbar .wide { margin-left: 7px; }
.navbar .tight { gap: 4px; }
.navbar .c { width: 11px; height: 8px; }

/* Timeline */
.timeline { height: 94px; flex: none; display: flex; background: #f1f1f1; border-top: 6px solid #ccc; }
.play { width: 253px; display: flex; align-items: center; justify-content: space-between; padding: 12px 24px 0 20px; }
.play svg { fill: #666; }
.track { flex: 1; position: relative; }
.track-scroll { position: absolute; left: 83px; top: 0; width: 56px; height: 13px; border-radius: 0 0 6px 6px; background: #ccc; }
.events { list-style: none; margin: 0; padding: 28px 0 0 14px; display: flex; background: linear-gradient(#ccc, #ccc) 4px 100% / 6px 4px no-repeat; }
.events li { position: relative; width: 45px; height: 49px; border-bottom: 4px solid #ccc; display: flex; flex-direction: column; align-items: center; background: linear-gradient(#ccc, #ccc) 50% 100% / 4px 10px no-repeat; }
.events svg { width: 30px; height: 30px; }
.events .marks { position: absolute; top: -18px; width: 30px; height: 12px; }
.off svg { opacity: .22; }
.marker { position: absolute; left: 2027px; top: 16px; }
.gear { width: 85px; padding-left: 30px; }
```

FILE: app.js
```js
// The floating distance box starts focused with its value selected.
const mini = document.getElementById("mini");
mini.focus();
mini.select();
```
